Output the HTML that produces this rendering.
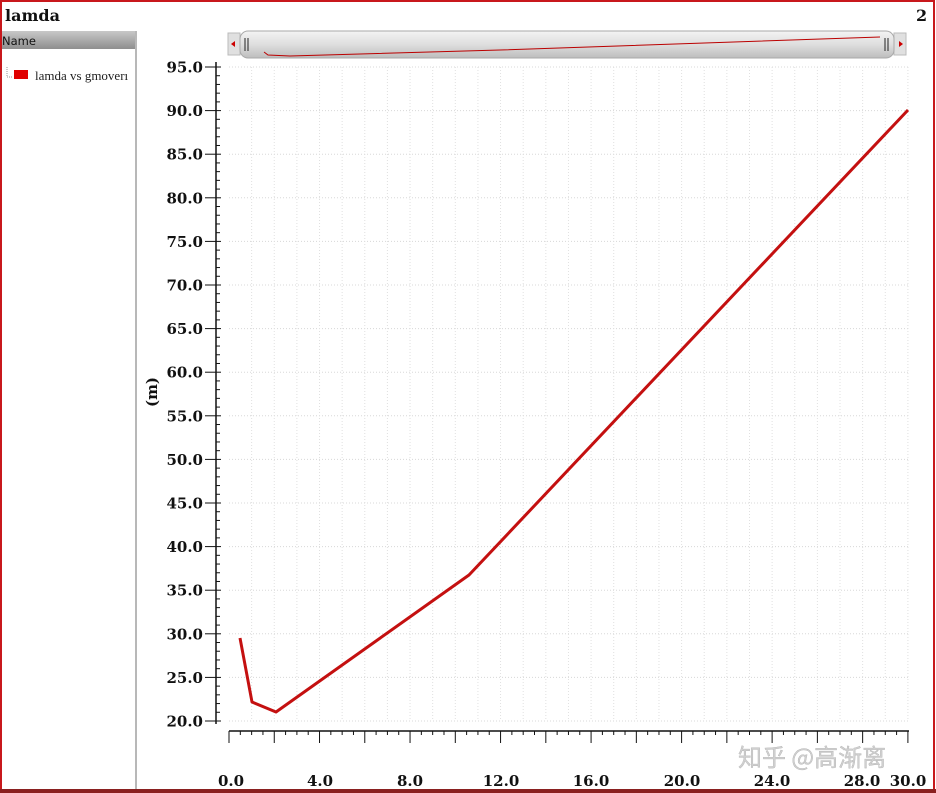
<!DOCTYPE html>
<html><head><meta charset="utf-8"><style>
html,body{margin:0;padding:0;background:#fff;}
body{width:936px;height:793px;position:relative;overflow:hidden;font-family:"Liberation Serif",serif;}
</style></head><body>
<svg width="936" height="793" viewBox="0 0 936 793" style="position:absolute;left:0;top:0">
<defs>
<linearGradient id="hd" x1="0" y1="0" x2="0" y2="1"><stop offset="0" stop-color="#c8c8c8"/><stop offset="1" stop-color="#8e8e8e"/></linearGradient>
<linearGradient id="sb" x1="0" y1="0" x2="0" y2="1"><stop offset="0" stop-color="#f4f4f4"/><stop offset="0.5" stop-color="#dedede"/><stop offset="1" stop-color="#bdbdbd"/></linearGradient>
</defs>
<rect x="0" y="0" width="936" height="793" fill="#fff"/>
<rect x="1" y="1" width="933" height="790" fill="none" stroke="#c8181c" stroke-width="2"/>
<line x1="0" y1="791" x2="936" y2="791" stroke="#8a2020" stroke-width="4"/>
<text x="5" y="21" font-family="DejaVu Serif,serif" font-size="16" font-weight="bold" fill="#111">lamda</text>
<text x="916" y="21" font-family="DejaVu Serif,serif" font-size="16" font-weight="bold" fill="#111">2</text>
<rect x="2" y="31" width="134" height="18" fill="url(#hd)"/>
<text x="2" y="45" font-family="DejaVu Sans,sans-serif" font-size="11.5" fill="#111">Name</text>
<line x1="136" y1="31" x2="136" y2="789" stroke="#b8b8b8" stroke-width="2"/>
<path d="M7 67 V77 H12" stroke="#999" fill="none" stroke-width="1" stroke-dasharray="1,1"/>
<rect x="14" y="70" width="14" height="9" fill="#e00000"/>
<text x="35" y="80" font-size="13" fill="#222">lamda vs gmoverı</text>
<rect x="228" y="33" width="12" height="22" fill="#e0e0e0" stroke="#bbb"/>
<path d="M231 44 l4 -3 v6z" fill="#c00"/>
<rect x="894" y="33" width="12" height="22" fill="#e0e0e0" stroke="#bbb"/>
<path d="M903 44 l-4 -3 v6z" fill="#c00"/>
<rect x="240" y="31" width="654" height="27" rx="8" fill="url(#sb)" stroke="#aaa"/>
<line x1="245" y1="38" x2="245" y2="51" stroke="#222"/><line x1="248" y1="38" x2="248" y2="51" stroke="#222"/>
<line x1="885" y1="38" x2="885" y2="51" stroke="#222"/><line x1="888" y1="38" x2="888" y2="51" stroke="#222"/>
<path d="M264 52 L268 55 L290 56 L500 50 L880 37" stroke="#b00" fill="none" stroke-width="1"/>
<g stroke="#d8d8d8" stroke-width="1" stroke-dasharray="1,2" id="hg"></g>
<g id="vg" stroke="#e0e0e0" stroke-width="1" stroke-dasharray="1,2"></g>
<line x1="216" y1="62" x2="216" y2="724" stroke="#111" stroke-width="1.5"/>
<line x1="229" y1="731" x2="909" y2="731" stroke="#111" stroke-width="1.5"/>
<g id="yt" stroke="#111" stroke-width="1"></g>
<g id="xt" stroke="#111" stroke-width="1"></g>
<g font-family="DejaVu Serif,serif" font-size="15" font-weight="bold" fill="#111" text-anchor="end" id="yl"></g>
<g font-family="DejaVu Serif,serif" font-size="15" font-weight="bold" fill="#111" text-anchor="middle">
<text x="231" y="786">0.0</text><text x="320" y="786">4.0</text><text x="410" y="786">8.0</text><text x="501" y="786">12.0</text><text x="591" y="786">16.0</text><text x="682" y="786">20.0</text><text x="772" y="786">24.0</text><text x="862" y="786">28.0</text><text x="908" y="786">30.0</text>
</g>
<text transform="translate(157,392) rotate(-90)" font-family="DejaVu Serif,serif" font-size="15" font-weight="bold" fill="#111" text-anchor="middle">(m)</text>
<text x="738" y="766" font-family="'Noto Sans CJK SC',sans-serif" font-size="24" fill="#d0d0d0" stroke="#aaa" stroke-width="0.3">知乎 @高渐离</text>
<polyline points="240,638 252,702 276,712 469,575 908,110" fill="none" stroke="#c41010" stroke-width="3" stroke-linejoin="round"/>
</svg>
<script>
var ns="http://www.w3.org/2000/svg";
function L(g,x1,y1,x2,y2){var l=document.createElementNS(ns,"line");l.setAttribute("x1",x1);l.setAttribute("y1",y1);l.setAttribute("x2",x2);l.setAttribute("y2",y2);document.getElementById(g).appendChild(l);}
for(var i=1;i<=30;i++){var x=229+i*22.63;L("vg",x,67,x,721);}
for(var v=20;v<=95;v+=5){var y=721-(v-20)*8.72;L("hg",229,y,908,y);}
for(var v=20;v<=95;v+=1){var y=721-(v-20)*8.72;if(v%5==0)L("yt",205,y,221,y);else L("yt",216,y,220,y);}
for(var k=0;k<=60;k++){var x=229+k*11.315;var len=(k%4==0)?12:4;L("xt",x,731,x,731+len);}
var yl=document.getElementById("yl");
for(var v=20;v<=95;v+=5){var t=document.createElementNS(ns,"text");t.setAttribute("x",203);t.setAttribute("y",721-(v-20)*8.72+5.5);t.textContent=v.toFixed(1);yl.appendChild(t);}
</script>
</body></html>
